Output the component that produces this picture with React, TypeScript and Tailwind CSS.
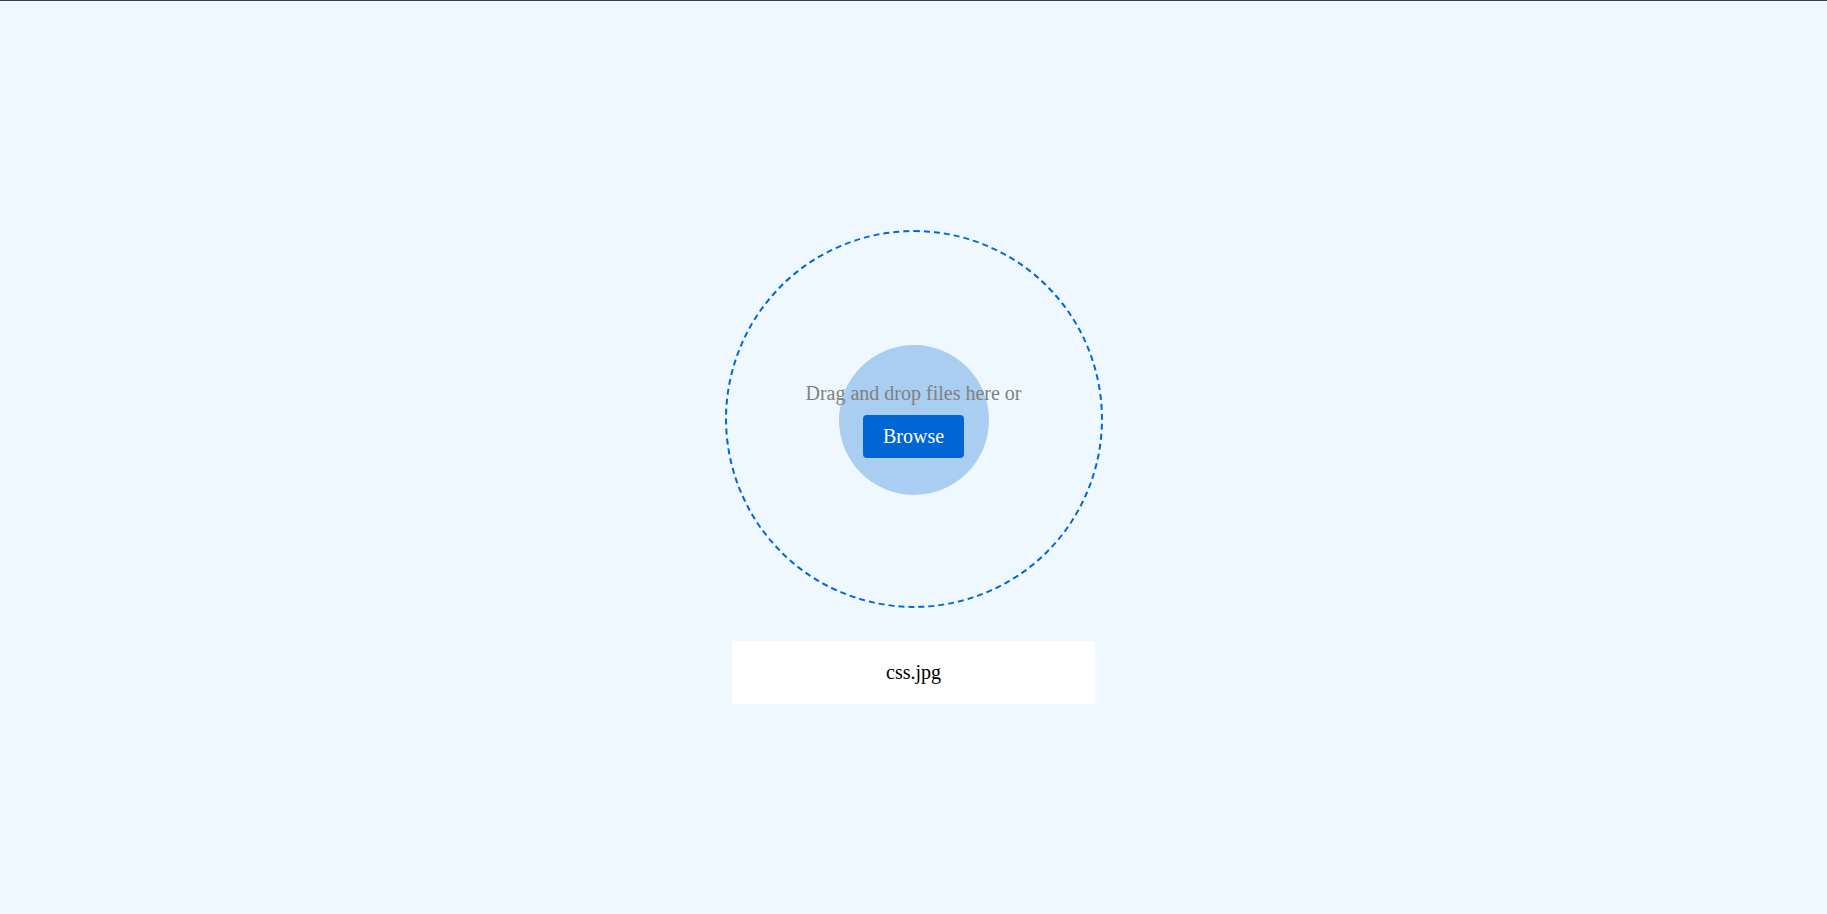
export default function App() {
    return (
        <div className="min-h-screen border-t border-[#3c3c3c] bg-[#f0f8ff] font-['Liberation_Serif','Times_New_Roman',serif]">
            <div className="flex flex-col items-center pt-[229px]">
                <div className="grid h-[378px] w-[378px] place-items-center rounded-full border-2 border-dashed border-[#0066d6] pt-[2px]">
                    <div className="col-start-1 row-start-1 h-[150px] w-[150px] rounded-full bg-[#aacdf2]" />
                    <div className="col-start-1 row-start-1 flex flex-col items-center">
                        <p className="mb-[10px] text-[20px] leading-[23px] text-[#808080]">Drag and drop files here or</p>
                        <button className="rounded-[4px] bg-[#0066d6] px-5 py-[10px] text-[20px] leading-[23px] text-white">Browse</button>
                    </div>
                </div>
                <div className="mt-[33px] w-[363px] bg-white py-5 text-center text-[20px] leading-[23px] text-black">css.jpg</div>
            </div>
        </div>
    );
}
